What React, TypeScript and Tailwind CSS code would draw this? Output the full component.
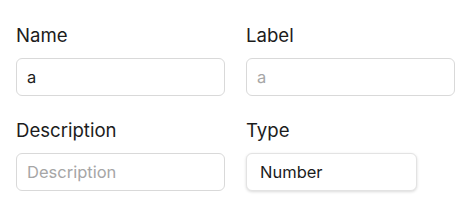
import React from 'react';

const font = { fontFamily: 'Inter, "Liberation Sans", sans-serif' };

function Field({ label, children }: { label: string; children: React.ReactNode }) {
  return (
    <div className="flex flex-col">
      <label className="text-[18.6px] leading-6 text-[#1c1c1c] mb-[11px]">{label}</label>
      {children}
    </div>
  );
}

export default function App() {
  return (
    <div className="w-[474px] h-[214px] bg-white pt-[23px] pl-4" style={font}>
      <div className="grid grid-cols-[209px_209px] gap-x-[21px] gap-y-[22px]">
        <Field label="Name">
          <input
            defaultValue="a"
            className="h-[38px] w-full rounded-md border border-[#d9d9d9] px-[10px] text-[16.5px] text-[#1c1c1c] outline-none"
          />
        </Field>
        <Field label="Label">
          <input
            placeholder="a"
            className="h-[38px] w-full rounded-md border border-[#d9d9d9] px-[10px] text-[16.5px] text-[#1c1c1c] placeholder:text-[#a6a6a6] outline-none"
          />
        </Field>
        <Field label="Description">
          <input
            placeholder="Description"
            className="h-[38px] w-full rounded-md border border-[#d9d9d9] px-[10px] text-[16.5px] text-[#1c1c1c] placeholder:text-[#a6a6a6] outline-none"
          />
        </Field>
        <Field label="Type">
          <div className="h-[38px] w-[171px] rounded-md border border-[#e3e3e3] bg-white px-[13px] flex items-center text-[16.5px] text-[#1c1c1c] shadow-[0_1px_3px_rgba(0,0,0,0.15)]">
            Number
          </div>
        </Field>
      </div>
    </div>
  );
}
